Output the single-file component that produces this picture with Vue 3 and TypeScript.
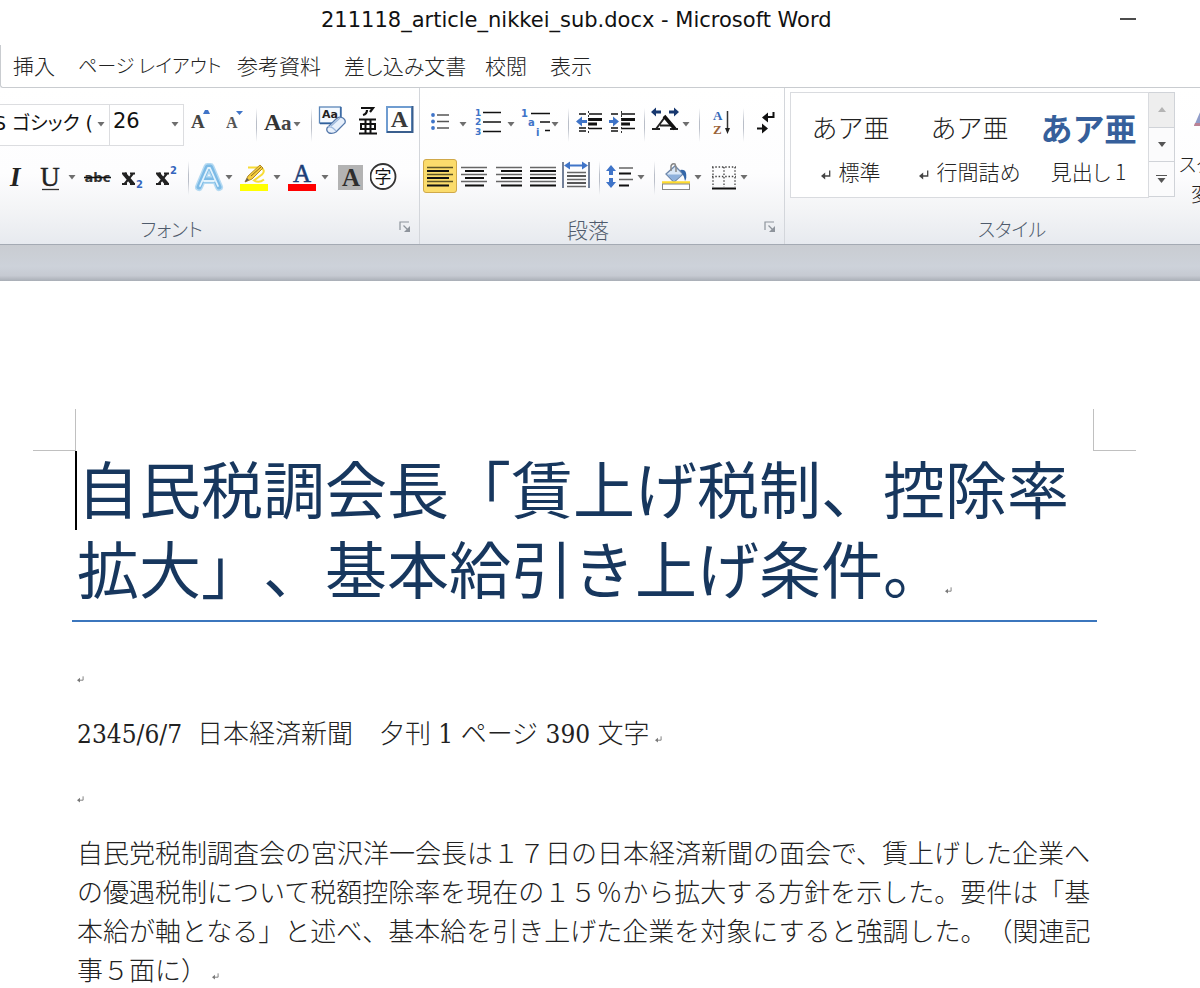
<script setup lang="ts">
import { h, ref } from 'vue'

interface Tab {
  label: string
  kana?: boolean
}

const tabs: Tab[] = [
  { label: '挿入' },
  { label: 'ページ レイアウト', kana: true },
  { label: '参考資料' },
  { label: '差し込み文書' },
  { label: '校閲' },
  { label: '表示' },
]

interface StyleItem {
  name: string
  mark: boolean
  heading: boolean
}

const styles: StyleItem[] = [
  { name: '標準', mark: true, heading: false },
  { name: '行間詰め', mark: true, heading: false },
  { name: '見出し 1', mark: false, heading: true },
]

const fontName = ref('MS ゴシック (')
const fontSize = ref('26')

const Caret = () =>
  h('svg', { width: 8, height: 40, viewBox: '0 0 8 40', 'aria-hidden': 'true' }, [
    h('path', { d: 'M0.5 17h7L4 21.5z', fill: '#6e6e6e' }),
  ])

const Mark = (props: { size?: number; color?: string }) =>
  h(
    'svg',
    { width: props.size ?? 7, height: props.size ?? 7, viewBox: '0 0 10 10', 'aria-hidden': 'true' },
    [
      h('path', { d: 'M8.7 0.5V6H3', fill: 'none', stroke: props.color ?? '#777', 'stroke-width': 1.3 }),
      h('path', { d: 'M0 6l4.2-3.4v6.8z', fill: props.color ?? '#777' }),
    ],
  )
Mark.props = ['size', 'color']

const Launcher = () =>
  h('svg', { width: 12, height: 12, viewBox: '0 0 12 12', 'aria-hidden': 'true' }, [
    h('path', { d: 'M1 9V1h9', fill: 'none', stroke: '#8e949c', 'stroke-width': 1.2 }),
    h('path', { d: 'M4.5 4.5L9 9', fill: 'none', stroke: '#8e949c', 'stroke-width': 1.3 }),
    h('path', { d: 'M11 5v6H5z', fill: '#8e949c' }),
  ])
</script>

<template>
  <div class="window">
    <header class="titlebar">
      <span class="title">211118_article_nikkei_sub.docx - Microsoft Word</span>
      <button class="minimize" aria-label="最小化"><svg width="16" height="4" viewBox="0 0 16 4"><path d="M0 1h16" stroke="#111" stroke-width="1.5" /></svg></button>
    </header>

    <nav class="tabs">
      <button v-for="tab in tabs" :key="tab.label" class="tab" :class="{ kana: tab.kana }">{{ tab.label }}</button>
    </nav>

    <div class="ribbon">
      <section class="group font-group">
        <div class="row font-row-1">
          <label class="combo"><input v-model="fontName" class="font-name" type="text" aria-label="フォント名"><Caret /></label>
          <label class="combo size"><input v-model="fontSize" class="font-size" type="text" aria-label="フォント サイズ"><Caret /></label>
          <button aria-label="フォントの拡大">
            <svg width="22" height="40" viewBox="0 0 22 40"><text x="1" y="23" class="serif bold" font-size="19" fill="#444">A</text><path d="M13 9h7l-2-4h-3z" fill="#3f74c8" /></svg>
          </button>
          <button aria-label="フォントの縮小">
            <svg width="22" height="40" viewBox="0 0 22 40"><text x="0" y="23" class="serif bold" font-size="16" fill="#555">A</text><path d="M10 6h7l-3.500 4z" fill="#3f74c8" /></svg>
          </button>
          <i class="sep"></i>
          <button aria-label="文字種の変換">
            <svg width="29" height="40" viewBox="0 0 29 40"><text x="0" y="25" class="serif bold" font-size="24" fill="#333">A</text><text x="17" y="25" class="serif bold" font-size="21" fill="#444">a</text></svg><Caret />
          </button>
          <i class="sep"></i>
          <button aria-label="書式のクリア">
            <svg width="30" height="40" viewBox="0 0 30 40">
              <rect x="1.500" y="2" width="21" height="16" fill="#f4f9ff" stroke="#5b86b8" stroke-width="1.300" />
              <path d="M2 18.500h21V2" fill="none" stroke="#2f5f9c" stroke-width="1.300" />
              <text x="4" y="13" class="sans bold" font-size="11" fill="#222">Aa</text>
              <path d="M9 23l9-9q3-3 7-1 3 2 2 5l-9 9q-3 2-7 1-3-2-2-5z" fill="#e8f0fb" stroke="#5579ab" stroke-width="1.300" />
              <path d="M10 22q4-1 8 4M13 21l9-8" fill="none" stroke="#9db8dc" stroke-width="1.300" />
            </svg>
          </button>
          <button aria-label="ルビ">
            <svg width="22" height="40" viewBox="0 0 22 40">
              <path d="M3 3h12l-3 4M9 5q0 4-4 5" fill="none" stroke="#111" stroke-width="2.200" />
              <path d="M1 14.500h17M1 28.500h18M3 19h14v5H3zM7.500 14.500v14M12.500 14.500v14" fill="none" stroke="#111" stroke-width="2" />
            </svg>
          </button>
          <button aria-label="囲み線">
            <svg width="28" height="40" viewBox="0 0 28 40"><rect x="1" y="2" width="25" height="25" fill="#fff" stroke="#6f9cd0" stroke-width="2" /><path d="M1 27h25.500V1" fill="none" stroke="#3a5f8e" stroke-width="2" /><text x="13.500" y="22" text-anchor="middle" class="serif bold" font-size="24" fill="#3a3a3a">A</text></svg>
          </button>
        </div>
        <div class="row font-row-2">
          <button aria-label="斜体"><svg width="20" height="40" viewBox="0 0 20 40"><text x="2" y="28" class="serif bold italic" font-size="27" fill="#222">I</text></svg></button>
          <button aria-label="下線">
            <svg width="28" height="40" viewBox="0 0 28 40"><text x="10" y="28" text-anchor="middle" class="serif" font-size="27" fill="#222" stroke="#222" stroke-width="0.400">U</text><path d="M2 31.500h17" stroke="#333" stroke-width="1.300" /></svg><Caret />
          </button>
          <button aria-label="取り消し線"><svg width="28" height="40" viewBox="0 0 28 40"><text x="13.500" y="24" text-anchor="middle" class="sans bold" font-size="13" fill="#333">abc</text><path d="M0 19.500h27" stroke="#111" stroke-width="1.500" /></svg></button>
          <button aria-label="下付き"><svg width="26" height="40" viewBox="0 0 26 40"><path d="M2 15.500h5M10 15.500h5M2 26h5M10 26h5M13 15.500L4.500 26" stroke="#222" stroke-width="2" /><path d="M4 15.500L13 26" stroke="#222" stroke-width="4" /><text x="16" y="30" class="sans bold" font-size="10" fill="#3566bd">2</text></svg></button>
          <button aria-label="上付き"><svg width="26" height="40" viewBox="0 0 26 40"><path d="M2 15.500h5M10 15.500h5M2 26h5M10 26h5M13 15.500L4.500 26" stroke="#222" stroke-width="2" /><path d="M4 15.500L13 26" stroke="#222" stroke-width="4" /><text x="16" y="16" class="sans bold" font-size="10" fill="#3566bd">2</text></svg></button>
          <i class="sep"></i>
          <button aria-label="文字の効果">
            <svg width="30" height="40" viewBox="0 0 30 40">
              <g fill="none" stroke-linejoin="round" stroke-linecap="round"><path d="M4 29L12.500 9h3L24 29M9 22h11" stroke="#b5daf2" stroke-width="8" /><path d="M4 29L12.500 9h3L24 29M9 22h11" stroke="#7dbbe6" stroke-width="5" /><path d="M5 28L13 10h2L23 28M9 23h10" stroke="#e3f3fd" stroke-width="1.800" /></g>
            </svg><Caret />
          </button>
          <button aria-label="蛍光ペン">
            <svg width="33" height="40" viewBox="0 0 33 40">
              <path d="M8 9.500h13q5 3 1 7l-8 6q5 3 10-1" fill="none" stroke="#f8dc35" stroke-width="2" />
              <path d="M5 24l3-6L20 7l3 3-11 11z" fill="#f6cf3d" stroke="#b08a2a" stroke-width="1" />
              <path d="M11 18L21 9" stroke="#8d6a20" stroke-width="1" /><path d="M5 24l2-4 2 2z" fill="#5c5c5c" />
              <rect x="0" y="26" width="28" height="7" fill="#ff0" />
            </svg><Caret />
          </button>
          <button aria-label="フォントの色">
            <svg width="33" height="40" viewBox="0 0 33 40"><text x="14" y="24" text-anchor="middle" class="serif" font-size="25" fill="#1d3f77" stroke="#1d3f77" stroke-width="0.500">A</text><rect x="0" y="26" width="28" height="7" fill="#f00" /></svg><Caret />
          </button>
          <button aria-label="文字の網かけ"><svg width="26" height="40" viewBox="0 0 26 40"><rect y="7" width="25" height="25" fill="#b3b3b3" /><text x="13" y="28" text-anchor="middle" class="serif bold" font-size="25" fill="#2e2e2e">A</text></svg></button>
          <button aria-label="囲い文字"><svg width="28" height="40" viewBox="0 0 28 40"><circle cx="13" cy="18.500" r="12.500" fill="#fff" stroke="#333" stroke-width="1.800" /><text x="13" y="25" text-anchor="middle" class="sans" font-size="17" fill="#111">字</text></svg></button>
        </div>
        <footer class="caption"><span class="kana">フォント</span><button aria-label="フォントの詳細"><Launcher /></button></footer>
      </section>

      <section class="group para-group">
        <div class="row para-row-1">
          <button aria-label="箇条書き">
            <svg width="28" height="40" viewBox="0 0 28 40"><g fill="#3f74c8"><circle cx="2" cy="10" r="1.900" /><circle cx="2" cy="16.500" r="1.900" /><circle cx="2" cy="23" r="1.900" /></g><path d="M6 10h12M6 16.500h12M6 23h12" stroke="#555" stroke-width="1.500" /></svg><Caret />
          </button>
          <button aria-label="段落番号">
            <svg width="32" height="40" viewBox="0 0 32 40"><g class="sans bold" font-size="9" fill="#3f74c8"><text x="0" y="11">1</text><text x="0" y="20">2</text><text x="0" y="30">3</text></g><path d="M8 7.500h18M8 17h18M8 26.500h18" stroke="#111" stroke-width="1.700" /></svg><Caret />
          </button>
          <button aria-label="アウトライン">
            <svg width="30" height="40" viewBox="0 0 30 40"><g class="sans bold" font-size="10" fill="#3f74c8"><text x="0" y="12">1</text><text x="7" y="21">a</text><text x="15" y="31">i</text></g><path d="M10 8.500h19M19 17h10M24 25.500h5" stroke="#111" stroke-width="1.700" /></svg><Caret />
          </button>
          <i class="sep"></i>
          <button aria-label="インデントを減らす">
            <svg width="28" height="40" viewBox="0 0 28 40"><path d="M3 9h7M13 9h13M3 23h7M3 26h7M13 23.500h13" stroke="#111" stroke-width="1.500" /><path d="M12 14.500h14M12 19h9" stroke="#111" stroke-width="3" /><path d="M12.500 6v23" stroke="#333" stroke-dasharray="2 2" /><path d="M0 16.500l6-5v3.500h5v3H6v3.500z" fill="#3f74c8" /></svg>
          </button>
          <button aria-label="インデントを増やす">
            <svg width="28" height="40" viewBox="0 0 28 40"><path d="M2 9h7M12 9h14M2 23h7M2 26h7M12 23.500h14" stroke="#111" stroke-width="1.500" /><path d="M12 14.500h14M12 19h9" stroke="#111" stroke-width="3" /><path d="M12.500 6v23" stroke="#333" stroke-dasharray="2 2" /><path d="M10 16.500l-6-5v3.500H0v3h4v3.500z" fill="#3f74c8" /></svg>
          </button>
          <i class="sep"></i>
          <button aria-label="拡張書式">
            <svg width="31" height="40" viewBox="0 0 31 40"><path d="M1 24h8M19 24h8M5 24L14 12M9 20.500h12" stroke="#222" stroke-width="2" /><path d="M13 11l11 13" stroke="#111" stroke-width="3.500" /><path d="M0 7l5-4.500v3h5v3H5v3zM28 7l-5-4.500v3h-5v3h5v3z" fill="#17386f" /></svg><Caret />
          </button>
          <i class="sep"></i>
          <button aria-label="並べ替え">
            <svg width="22" height="40" viewBox="0 0 22 40"><text x="2" y="15" class="serif bold" font-size="13" fill="#3569b8">A</text><text x="2" y="29" class="serif bold" font-size="13" fill="#9a6238">Z</text><path d="M16.500 6v19" stroke="#333" stroke-width="1.500" /><path d="M14 23h5l-2.500 6z" fill="#222" /></svg>
          </button>
          <i class="sep"></i>
          <button aria-label="編集記号の表示">
            <svg width="20" height="40" viewBox="0 0 20 40"><path d="M16.500 7v5H9M0 23.500h7" fill="none" stroke="#111" stroke-width="2" /><path d="M5 12.500l6-5v10zM11 23.500l-6-5v10z" fill="#111" /></svg>
          </button>
        </div>
        <div class="row para-row-2">
          <button class="align active" aria-label="左揃え" aria-pressed="true"><svg width="26" height="40" viewBox="0 0 26 40"><path d="M0 9.500h26M0 16.500h26M0 23.500h26" stroke="#5e5526" stroke-width="1.500" /><path d="M0 13h22M0 20h22M0 27.500h22" stroke="#111" stroke-width="2" /></svg></button>
          <button class="align" aria-label="中央揃え"><svg width="26" height="40" viewBox="0 0 26 40"><path d="M0 9.500h26M0 16.500h26M0 23.500h26" stroke="#666" stroke-width="1.500" /><path d="M4 13h19M4 20h19M4 27.500h19" stroke="#111" stroke-width="2" /></svg></button>
          <button class="align" aria-label="右揃え"><svg width="26" height="40" viewBox="0 0 26 40"><path d="M0 9.500h26M0 16.500h26M0 23.500h26" stroke="#666" stroke-width="1.500" /><path d="M5 13h21M5 20h21M5 27.500h21" stroke="#111" stroke-width="2" /></svg></button>
          <button class="align" aria-label="両端揃え"><svg width="26" height="40" viewBox="0 0 26 40"><path d="M0 9.500h26M0 16.500h26M0 23.500h26" stroke="#666" stroke-width="1.500" /><path d="M0 13h26M0 20h26M0 27.500h26" stroke="#111" stroke-width="2" /></svg></button>
          <button aria-label="均等割り付け"><svg width="30" height="40" viewBox="0 0 30 40"><path d="M1 4v26M27 4v26" stroke="#47597a" stroke-width="1.500" /><path d="M5 14.500h19M5 21.500h19M5 28.500h19" stroke="#666" stroke-width="1.500" /><path d="M5 18h19M5 25h19" stroke="#222" stroke-width="1.500" /><path d="M5 7.500h18" stroke="#3f74c8" stroke-width="2" /><path d="M2 7.500l6-4v8zM26 7.500l-6-4v8z" fill="#3f74c8" /></svg></button>
          <i class="sep"></i>
          <button aria-label="行間">
            <svg width="31" height="40" viewBox="0 0 31 40"><path d="M5 7l5 6H7v4H3v-4H0zM5 30l-5-6h3v-4h4v4h3z" fill="#3f74c8" /><path d="M13 10h14M13 21.500h14" stroke="#666" stroke-width="1.500" /><path d="M13 15.500h12M13 27.500h10" stroke="#111" stroke-width="2" /></svg><Caret />
          </button>
          <i class="sep"></i>
          <button aria-label="塗りつぶし">
            <svg width="32" height="40" viewBox="0 0 32 40">
              <path d="M4 16l9-8 8 8-9 8z" fill="#dbe8f7" stroke="#6d87ab" stroke-width="1.300" /><path d="M5 16.500h15l-8 7z" fill="#8fb1dc" />
              <path d="M9 13V8q1-3 4-2l1 3v5" fill="none" stroke="#888" stroke-width="1.500" /><path d="M18 12q5-1 6 3 1 5-1 8-1-5-3-8z" fill="#3467a9" />
              <path d="M0 24.500h28" stroke="#ffdb2c" stroke-width="2.500" /><rect x="0.500" y="26" width="27" height="5.500" fill="#fff" stroke="#888" />
            </svg><Caret />
          </button>
          <button aria-label="罫線">
            <svg width="29" height="40" viewBox="0 0 29 40"><path d="M1 9h24M1 18.500h24M2 9v20M13 9v20M24 9v20" fill="none" stroke="#444" stroke-width="1.300" stroke-dasharray="1.500 1.800" /><path d="M1 30.500h24" stroke="#111" stroke-width="2" /></svg><Caret />
          </button>
        </div>
        <footer class="caption"><span>段落</span><button aria-label="段落の詳細"><Launcher /></button></footer>
      </section>

      <section class="group style-group">
        <div class="style-area">
          <div class="gallery">
            <button v-for="s in styles" :key="s.name" class="style-item">
              <span class="preview" :class="{ heading: s.heading }">あア亜</span>
              <span class="style-name"><Mark v-if="s.mark" :size="10" color="#444" />{{ s.name }}</span>
            </button>
          </div>
          <div class="scroller">
            <button class="disabled" aria-label="上へ"><svg width="8" height="5" viewBox="0 0 8 5"><path d="M0 5h8L4 0z" fill="#b4b4b4" /></svg></button>
            <button aria-label="下へ"><svg width="8" height="5" viewBox="0 0 8 5"><path d="M0 0h8L4 5z" fill="#555" /></svg></button>
            <button aria-label="その他"><svg width="11" height="8" viewBox="0 0 11 8"><path d="M0 0.500h11" stroke="#555" /><path d="M1.500 3h8l-4 5z" fill="#555" /></svg></button>
          </div>
          <button class="change" aria-label="スタイルの変更">
            <svg width="60" height="40" viewBox="0 0 60 40"><path d="M15 16L22 0h10l10 16h-9l-2-4H25l-2 4z" fill="#8f9cc9" /><path d="M15 16l1-3h8l-1 3z" fill="#bb8295" /></svg>
            <span class="kana">スタイルの</span>
            <span class="second">変更</span>
          </button>
        </div>
        <footer class="caption style-caption"><span class="kana">スタイル</span></footer>
      </section>
    </div>

    <div class="desk"></div>

    <main class="page">
      <div class="corners"><i class="corner left"></i><i class="corner right"></i></div>
      <div class="content">
        <h1><i class="cursor"></i>自民税調会長「賃上げ税制、控除率拡大」、基本給引き上げ条件。<Mark /></h1>
        <p><Mark /></p>
        <p>2345/6/7&nbsp; 日本経済新聞　夕刊 1 ページ 390 文字<Mark class="end" /></p>
        <p><Mark /></p>
        <p>自民党税制調査会の宮沢洋一会長は１７日の日本経済新聞の面会で、賃上げした企業への優遇税制について税額控除率を現在の１５％から拡大する方針を示した。要件は「基本給が軸となる」と述べ、基本給を引き上げた企業を対象にすると強調した。（関連記事５面に）<Mark class="end" /></p>
      </div>
    </main>
  </div>
</template>

<style>
body {
  margin: 0;
  background: #fff;
}
</style>

<style scoped>
.window {
  min-height: 100vh;
  overflow: hidden;
  background: #fff;
  color: #222;
  font-family: "DejaVu Sans", "Noto Sans CJK JP", sans-serif;
  text-spacing-trim: space-all;
}
button {
  display: flex;
  padding: 0;
  border: 0;
  background: none;
  color: inherit;
  font: inherit;
}
svg {
  flex: none;
}
.serif { font-family: "Liberation Serif", serif; }
.sans { font-family: "DejaVu Sans", "Noto Sans CJK JP", sans-serif; }
.bold { font-weight: 700; }
.italic { font-style: italic; }

.titlebar {
  display: flex;
  align-items: center;
  height: 40px;
  padding: 0 64px 0 321px;
  color: #111;
  font-size: 21px;
}
.title {
  flex: 1;
  white-space: nowrap;
}
.tabs {
  display: grid;
  grid-template-columns: 65px 159px 107px 141px 65px 65px;
  align-items: center;
  height: 39px;
  margin-top: 5px;
  padding: 0 0 3px 12px;
  border: solid #c9ccd0;
  border-width: 0 0 1px 1px;
  border-bottom-left-radius: 3px;
}
.tab,
.caption,
.combo input,
.style-name,
.change {
  font-family: "Noto Sans CJK JP", sans-serif;
  font-feature-settings: "palt";
  font-size: 21px;
  font-weight: 300;
  line-height: 28px;
  white-space: nowrap;
}
.tab.kana,
.kana {
  font-size: 19px;
}
.ribbon {
  display: flex;
  height: 156px;
  border-bottom: 1px solid #a4aab3;
  background: linear-gradient(#fff 0%, #fdfdfe 55%, #f3f4f6 78%, #e7eaef 100%);
}
.group {
  flex: none;
  display: flex;
  flex-direction: column;
  box-sizing: border-box;
  border-right: 1px solid #d3d6db;
}
.font-group {
  width: 476px;
  margin-left: -56px;
}
.para-group {
  width: 365px;
}
.style-group {
  flex: 1;
  min-width: 0;
  overflow: hidden;
  border: 0;
}
.row {
  display: grid;
  height: 40px;
  align-items: start;
}
.font-row-1 {
  grid-template-columns: 166px 80px 36px 30px 8px 47px 7px 40px 28px 28px;
  margin-top: 17px;
}
.font-row-2 {
  grid-template-columns: 32px 44px 36px 34px 34px 7px 45px 48px 50px 32px 28px;
  margin-top: 13px;
  padding-left: 64px;
}
.para-row-1 {
  grid-template-columns: 44px 46px 47px 8px 33px 35px 7px 48px 12px 32px 14px 20px;
  margin-top: 17px;
  padding-left: 11px;
}
.para-row-2 {
  grid-template-columns: 34px 35px 34px 36px 37px 7px 48px 8px 49px 40px;
  margin-top: 13px;
  padding-left: 3px;
}
.sep {
  width: 1px;
  height: 34px;
  margin-top: 3px;
  background: linear-gradient(transparent, #b9bec8 40%, #b9bec8 60%, transparent);
}
.combo {
  display: flex;
  box-sizing: border-box;
  height: 42px;
  margin-top: -1px;
  padding-right: 4px;
  border: 1px solid #dcdde0;
  background: #fff;
}
.combo.size {
  width: 74px;
  border-left: 0;
}
.combo input {
  flex: 1;
  min-width: 0;
  height: 32px;
  padding: 0;
  border: 0;
  outline: 0;
  background: none;
  color: #111;
  font-family: "DejaVu Sans", "Noto Sans CJK JP", sans-serif;
  font-weight: 400;
}
.combo .font-name {
  padding-right: 4px;
  font-size: 19px;
  text-align: right;
}
.combo .font-size {
  padding-left: 3px;
}
.align {
  height: 34px;
  justify-content: center;
  width: 34px;
  margin-top: 1px;
  box-sizing: border-box;
  border: 1px solid transparent;
  border-radius: 3px;
}
.align svg {
  margin-top: -2px;
}
.align.active {
  border-color: #d0a94a;
  background: #fbdc6c;
}
.caption {
  display: flex;
  align-items: center;
  margin-top: auto;
  padding: 0 8px 1px 0;
  color: #4f5b6c;
}
.caption span {
  flex: 1;
  text-align: center;
}
.caption button {
  margin-bottom: 4px;
}
.para-group .caption span {
  padding-right: 8px;
}
.style-area {
  display: flex;
  padding: 4px 0 0 5px;
}
.gallery {
  flex: none;
  display: flex;
  box-sizing: border-box;
  height: 106px;
  border: 1px solid #d9dbdf;
  background: #fff;
}
.style-item {
  flex-direction: column;
  align-items: center;
  width: 119px;
  padding-top: 14px;
}
.preview {
  height: 40px;
  color: #222;
  font-family: "Noto Sans CJK JP", sans-serif;
  font-size: 26px;
  font-weight: 300;
  line-height: 40px;
}
.preview.heading {
  color: #365f9b;
  font-size: 32px;
  font-weight: 700;
}
.style-name {
  margin-top: 10px;
}
.style-name svg {
  margin-right: 8px;
}
.scroller {
  flex: none;
  display: flex;
  flex-direction: column;
  width: 26px;
  height: 105px;
}
.scroller button {
  flex: 1;
  align-items: center;
  justify-content: center;
  border: solid #d0d3d8;
  border-width: 1px 1px 0 0;
  background: #fbfbfc;
}
.scroller button:last-child {
  border-bottom-width: 1px;
}
.scroller .disabled {
  background: #eee;
}
.change {
  flex-direction: column;
  align-items: flex-start;
  flex: none;
  margin-left: 4px;
  padding-top: 18px;
}
.change .second {
  padding-left: 12px;
}
.style-caption {
  padding-left: 37px;
}
.style-caption span {
  flex: none;
  width: 380px;
}
.desk {
  height: 36px;
  background: linear-gradient(#c9ccd1, #cdd2da 60%, #c6cad2 85%, #a9aeb6);
}
.page {
  background: #fff;
}
.corners {
  display: flex;
  justify-content: space-between;
  padding: 128px 64px 0 33px;
}
.corner {
  width: 42px;
  height: 41px;
  border: 0 solid #c0c0c0;
  border-bottom-width: 1px;
}
.corner.left {
  border-right-width: 1px;
}
.corner.right {
  border-left-width: 1px;
}
.content {
  padding: 0 103px 0 72px;
}
h1 {
  position: relative;
  margin: -4px 0 33px;
  padding: 0 0 13px 5px;
  border-bottom: 2px solid #3b76bd;
  color: #17375e;
  font-family: "Noto Sans CJK JP", sans-serif;
  font-size: 62px;
  font-weight: 400;
  line-height: 80px;
}
.cursor {
  position: absolute;
  top: 4px;
  left: 3px;
  width: 2px;
  height: 79px;
  background: #000;
}
p {
  margin: 0 0 21px;
  padding: 0 3px 0 5px;
  color: #222;
  font-family: "DejaVu Serif Condensed", "Noto Sans CJK JP", serif;
  font-size: 26px;
  font-weight: 300;
  line-height: 39px;
}
.end {
  margin-left: 5px;
}
</style>
